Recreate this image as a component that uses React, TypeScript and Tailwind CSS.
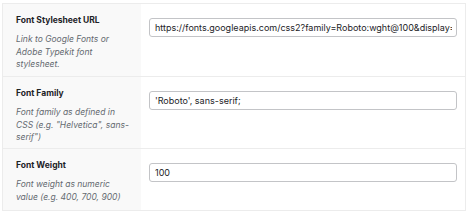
import React from 'react';

type Field = {
  label: string;
  help: string;
  value: string;
  rowClass: string;
};

const fields: Field[] = [
  {
    label: 'Font Stylesheet URL',
    help: 'Link to Google Fonts or Adobe Typekit font stylesheet.',
    value: 'https://fonts.googleapis.com/css2?family=Roboto:wght@100&display=swap',
    rowClass: 'h-[73px]',
  },
  {
    label: 'Font Family',
    help: 'Font family as defined in CSS (e.g. "Helvetica", sans-serif")',
    value: "'Roboto', sans-serif;",
    rowClass: 'h-[72px]',
  },
  {
    label: 'Font Weight',
    help: 'Font weight as numeric value (e.g. 400, 700, 900)',
    value: '100',
    rowClass: 'h-[62px]',
  },
];

export default function App() {
  return (
    <div className="w-[474px] h-[212px] bg-white overflow-hidden font-['Inter',sans-serif]">
      <div className="ml-[2px] mt-[3px] w-[464px] border-l border-r border-t border-[#ececec]">
        {fields.map((f) => (
          <div key={f.label} className={`grid grid-cols-[138px_1fr] border-b border-[#ececec] ${f.rowClass}`}>
            <div className="bg-[#f9f9f9] pl-[13px] pr-[10px] pt-[10px]">
              <div className="text-[8.5px] leading-[12px] font-bold text-[#1d2327]">{f.label}</div>
              <div className="mt-[7px] text-[8.5px] leading-[12.5px] italic text-[#646970]">{f.help}</div>
            </div>
            <div className="pl-[8px] pr-[8px] pt-[9px]">
              <input
                readOnly
                type="text"
                value={f.value}
                className="w-full h-[19px] pl-[5px] pr-[4px] rounded-[3px] border border-[#c3c4c7] bg-white text-[9px] text-[#1d2327] outline-none font-['Inter',sans-serif]"
              />
            </div>
          </div>
        ))}
      </div>
    </div>
  );
}
